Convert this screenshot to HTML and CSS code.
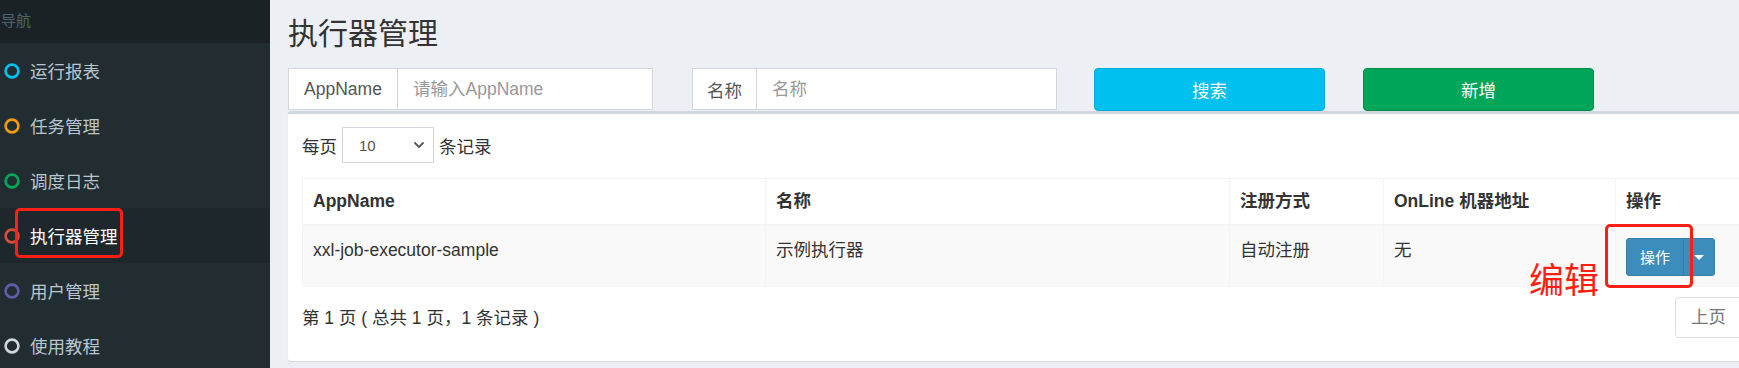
FILE: index.html
```html
<!DOCTYPE html>
<html lang="zh-CN">
<head>
<meta charset="utf-8">
<title>执行器管理</title>
<link rel="stylesheet" href="styles.css">
</head>
<body>
<div class="app">
  <aside class="sidebar">
    <div class="nav-header">导航</div>
    <ul class="menu">
      <li class="menu-item"><svg class="ring ring-aqua" width="16" height="16" viewBox="0 0 16 16"><circle cx="8" cy="8" r="6.4" fill="none" stroke="currentColor" stroke-width="2.6"/></svg><span>运行报表</span></li>
      <li class="menu-item"><svg class="ring ring-yellow" width="16" height="16" viewBox="0 0 16 16"><circle cx="8" cy="8" r="6.4" fill="none" stroke="currentColor" stroke-width="2.6"/></svg><span>任务管理</span></li>
      <li class="menu-item"><svg class="ring ring-green" width="16" height="16" viewBox="0 0 16 16"><circle cx="8" cy="8" r="6.4" fill="none" stroke="currentColor" stroke-width="2.6"/></svg><span>调度日志</span></li>
      <li class="menu-item active"><svg class="ring ring-red" width="16" height="16" viewBox="0 0 16 16"><circle cx="8" cy="8" r="6.4" fill="none" stroke="currentColor" stroke-width="2.6"/></svg><span>执行器管理</span></li>
      <li class="menu-item"><svg class="ring ring-purple" width="16" height="16" viewBox="0 0 16 16"><circle cx="8" cy="8" r="6.4" fill="none" stroke="currentColor" stroke-width="2.6"/></svg><span>用户管理</span></li>
      <li class="menu-item"><svg class="ring ring-gray" width="16" height="16" viewBox="0 0 16 16"><circle cx="8" cy="8" r="6.4" fill="none" stroke="currentColor" stroke-width="2.6"/></svg><span>使用教程</span></li>
    </ul>
  </aside>
  <main class="content">
    <h1 class="title">执行器管理</h1>
    <div class="filters">
      <div class="input-group group-app">
        <span class="addon addon-app">AppName</span>
        <input class="field" type="text" placeholder="请输入AppName">
      </div>
      <div class="input-group group-name">
        <span class="addon addon-name">名称</span>
        <input class="field" type="text" placeholder="名称">
      </div>
      <button class="btn btn-search">搜索</button>
      <button class="btn btn-add">新增</button>
    </div>
    <section class="box">
      <div class="length">
        <span>每页</span>
        <div class="select"><span>10</span><svg width="12" height="8" viewBox="0 0 12 8"><polyline points="1.5,1.5 6,6 10.5,1.5" fill="none" stroke="#555" stroke-width="1.8"/></svg></div>
        <span>条记录</span>
      </div>
      <table class="grid">
        <colgroup>
          <col class="c1"><col class="c2"><col class="c3"><col class="c4"><col>
        </colgroup>
        <thead>
          <tr><th>AppName</th><th>名称</th><th>注册方式</th><th>OnLine 机器地址</th><th>操作</th></tr>
        </thead>
        <tbody>
          <tr>
            <td>xxl-job-executor-sample</td>
            <td>示例执行器</td>
            <td>自动注册</td>
            <td>无</td>
            <td><div class="split"><span class="split-main">操作</span><span class="split-caret"><i class="caret"></i></span></div></td>
          </tr>
        </tbody>
      </table>
      <div class="footer-row">
        <div class="info">第 1 页 ( 总共 1 页，1 条记录 )</div>
        <div class="pager">
          <span class="page-btn first">上页</span>
        </div>
      </div>
    </section>
  </main>
</div>
<div class="mark mark-side"></div>
<div class="mark mark-btn"></div>
<div class="mark-label">编辑</div>
</body>
</html>
```
FILE: styles.css
```css
* { box-sizing: border-box; }

body {
  margin: 0;
  width: 1739px;
  height: 368px;
  overflow: hidden;
  position: relative;
  font-family: "Liberation Sans", "Noto Sans CJK SC", sans-serif;
  font-size: 17.5px;
  color: #333;
  background: #ecf0f5;
}

.app {
  display: flex;
  height: 368px;
}

/* sidebar */
.sidebar {
  width: 270px;
  flex: none;
  background: #222d32;
  overflow: hidden;
}

.nav-header {
  height: 43px;
  line-height: 42px;
  background: #1a2226;
  color: #4b646f;
  font-size: 15px;
  padding-left: 1px;
}

.menu {
  list-style: none;
  margin: 0;
  padding: 0;
}

.menu-item {
  height: 55px;
  display: flex;
  align-items: center;
  gap: 10px;
  padding-left: 4px;
  color: #b8c7ce;
}

.menu-item.active {
  background: #1e282c;
  color: #fff;
}

.ring { flex: none; }
.ring-aqua { color: #00c0ef; }
.ring-yellow { color: #f39c12; }
.ring-green { color: #00a65a; }
.ring-red { color: #dd4b39; }
.ring-purple { color: #605ca8; }
.ring-gray { color: #d2d6de; }

/* content */
.content {
  flex: 1;
  min-width: 0;
  overflow: hidden;
  padding: 16px 0 0 18px;
}

.title {
  margin: 0;
  height: 36px;
  font-size: 30px;
  line-height: 36px;
  font-weight: 400;
  color: #333;
}

.filters {
  display: flex;
  margin-top: 16px;
  height: 43px;
}

.input-group {
  display: flex;
  width: 365px;
  height: 42px;
}

.group-name { margin-left: 39px; }

.addon {
  flex: none;
  display: flex;
  align-items: center;
  justify-content: center;
  border: 1px solid #d2d6de;
  background: #fff;
  color: #555;
}

.addon-app { width: 110px; }
.addon-name { width: 65px; }

.field {
  flex: 1;
  min-width: 0;
  height: 42px;
  border: 1px solid #d2d6de;
  border-left: 0;
  background: #fff;
  padding: 0 15px;
  font: inherit;
  color: #555;
  outline: none;
}

.field::placeholder { color: #999; }

.btn {
  height: 43px;
  border-radius: 4px;
  border: 1px solid transparent;
  color: #fff;
  font: inherit;
  padding: 0;
}

.btn-search {
  width: 231px;
  margin-left: 37px;
  background: #00c0ef;
  border-color: #00acd6;
}

.btn-add {
  width: 231px;
  margin-left: 38px;
  background: #00a65a;
  border-color: #008d4c;
}

/* box */
.box {
  width: 1468px;
  background: #fff;
  border-top: 3px solid #d2d6de;
  border-radius: 3px;
  box-shadow: 0 1px 1px rgba(0, 0, 0, 0.1);
  padding: 13px 14px 23px;
}

.length {
  display: flex;
  align-items: center;
  gap: 5px;
  height: 36px;
}

.select {
  width: 92px;
  height: 36px;
  border: 1px solid #d2d6de;
  display: flex;
  align-items: center;
  justify-content: space-between;
  padding: 0 8px 0 16px;
  font-size: 15px;
  color: #555;
}

.grid {
  margin-top: 15px;
  width: 100%;
  border-collapse: collapse;
  border: 1px solid #f4f4f4;
  table-layout: fixed;
}

.c1 { width: 463px; }
.c2 { width: 464px; }
.c3 { width: 154px; }
.c4 { width: 232px; }

.grid th,
.grid td {
  border: 1px solid #f4f4f4;
  padding: 10px;
  line-height: 25px;
  text-align: left;
  vertical-align: top;
  white-space: nowrap;
}

.grid th {
  font-weight: 700;
  border-bottom-width: 2px;
}

.grid td { padding-top: 12px; }

.grid tbody tr { background: #f9f9f9; }

.split {
  display: inline-flex;
  height: 38px;
  border-radius: 3px;
  overflow: hidden;
  background: #3c8dbc;
  border: 1px solid #367fa9;
  color: #fff;
  font-size: 15px;
}

.split-main {
  width: 57px;
  display: flex;
  align-items: center;
  justify-content: center;
  border-right: 1px solid #367fa9;
}

.split-caret {
  width: 30px;
  display: flex;
  align-items: center;
  justify-content: center;
}

.caret {
  width: 0;
  height: 0;
  border-top: 5px solid #fff;
  border-left: 5px solid transparent;
  border-right: 5px solid transparent;
}

.footer-row {
  margin-top: 10px;
  display: flex;
  justify-content: space-between;
  align-items: center;
  height: 41px;
}

.info { margin-top: -3px; }

.pager { display: flex; }

.page-btn {
  height: 41px;
  line-height: 39px;
  padding: 0 15px;
  border: 1px solid #ddd;
  color: #777;
  background: #fff;
}

.page-btn.first { border-radius: 4px 0 0 4px; }

/* annotations */
.mark {
  position: absolute;
  border: 3px solid #fe1f14;
  border-radius: 5px;
}

.mark-side {
  left: 15px;
  top: 208px;
  width: 108px;
  height: 50px;
}

.mark-btn {
  left: 1605px;
  top: 224px;
  width: 88px;
  height: 64px;
}

.mark-label {
  position: absolute;
  left: 1529px;
  top: 260px;
  font-family: "Noto Sans CJK SC", sans-serif;
  font-size: 35px;
  line-height: 1;
  color: #fe1f14;
}
```
